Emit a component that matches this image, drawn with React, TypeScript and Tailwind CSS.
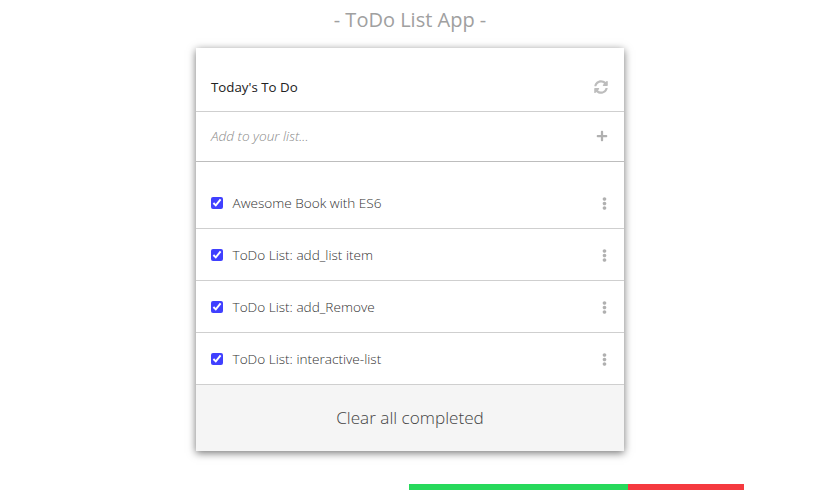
// Lista de tareas: título, tarjeta con cabecera, campo de alta, filas y pie, más la barra inferior.
import { FaEllipsisV, FaPlus, FaSyncAlt } from 'react-icons/fa';

const TAREAS = [
  'Awesome Book with ES6',
  'ToDo List: add_list item',
  'ToDo List: add_Remove',
  'ToDo List: interactive-list',
];

function FilaTarea({ texto }: { texto: string }) {
  return (
    <li className="flex h-[52px] items-center border-b border-[#cfcfcf] pr-[13px] pl-[15px]">
      <input type="checkbox" defaultChecked className="h-[12px] w-[12px] accent-[#4040ff]" />
      <span className="ml-[9.5px] pt-[2px] text-[13.6px] font-light text-[#333333]">{texto}</span>
      <FaEllipsisV className="mt-[1px] ml-auto h-[13px] w-[13px] text-[#b0b0b0]" aria-hidden />
    </li>
  );
}

export default function App() {
  return (
    <div className="h-[490px] overflow-hidden bg-white font-['Open_Sans',sans-serif]">
      <h1 className="h-[48px] pt-[4px] pl-[2px] text-center text-[20px] leading-[32px] font-normal text-[#a0a0a0]">
        - ToDo List App -
      </h1>
      <main className="ml-[196px] w-[428px] bg-white shadow-[0_2px_8px_rgba(0,0,0,0.55)]">
        <header className="flex h-[64px] items-center justify-between border-b border-[#cfcfcf] pr-[16px] pl-[15px] pt-[14px]">
          <h2 className="pt-[2px] text-[13.3px] font-medium text-[#222222]">Today's To Do</h2>
          <FaSyncAlt className="h-[14px] w-[14px] text-[#bdbdbd]" aria-hidden />
        </header>
        <div className="flex h-[50px] items-center justify-between border-b border-[#bdbdbd] pr-[16px] pl-[15px]">
          <span className="text-[13.6px] font-light text-[#8a8a8a] italic">Add to your list...</span>
          <FaPlus className="mb-[1px] h-[12px] w-[12px] text-[#b0b0b0]" aria-hidden />
        </div>
        <ul className="pt-[15px]">
          {TAREAS.map((t) => (
            <FilaTarea key={t} texto={t} />
          ))}
        </ul>
        <button
          type="button"
          className="block h-[66px] w-full bg-[#f5f5f5] text-center text-[17.15px] font-light text-[#444444]"
        >
          Clear all completed
        </button>
      </main>
      <div className="mt-[33px] ml-[409px] flex h-[6px] w-[335px]">
        <div className="w-[219px] bg-[#27d95b]" />
        <div className="flex-1 bg-[#f53a3f]" />
      </div>
    </div>
  );
}
